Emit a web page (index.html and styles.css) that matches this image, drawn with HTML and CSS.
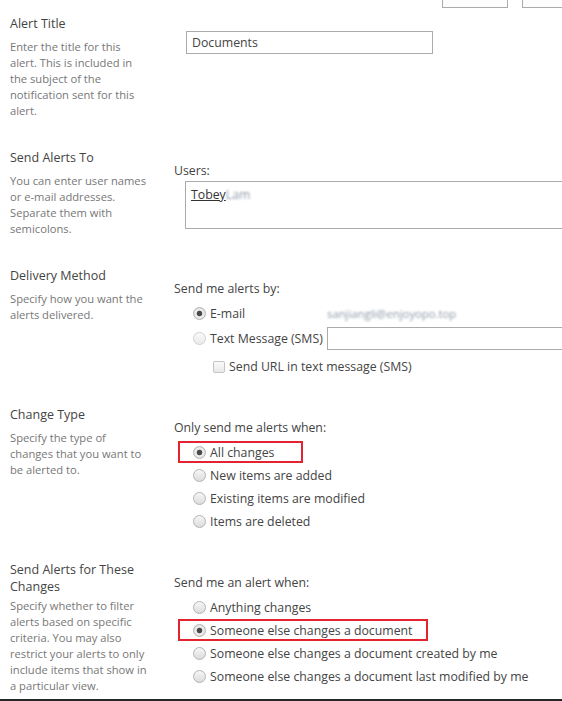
FILE: index.html
```html
<!DOCTYPE html>
<html lang="en">
<head>
    <meta charset="UTF-8" />
    <meta name="viewport" content="width=device-width, initial-scale=1" />
    <title>New Alert</title>
    <link rel="stylesheet" href="styles.css">
</head>
<body>
    <div class="page">
        <div class="toolbar">
            <button class="btn" aria-label="OK"></button>
            <button class="btn btn-wide" aria-label="Cancel"></button>
        </div>

        <div class="section">
            <div class="info">
                <h3 class="info-title">Alert Title</h3>
                <p class="info-desc">Enter the title for this<br>alert. This is included in<br>the subject of the<br>notification sent for this<br>alert.</p>
            </div>
            <div class="field">
                <input type="text" class="text-box title-box" value="Documents" />
            </div>
        </div>

        <div class="section">
            <div class="info">
                <h3 class="info-title">Send Alerts To</h3>
                <p class="info-desc">You can enter user names<br>or e-mail addresses.<br>Separate them with<br>semicolons.</p>
            </div>
            <div class="field">
                <div class="field-label">Users:</div>
                <div class="people-box">
                    <span class="person">Tobey</span><span class="blurred">Lam</span>
                </div>
            </div>
        </div>

        <div class="section">
            <div class="info">
                <h3 class="info-title">Delivery Method</h3>
                <p class="info-desc">Specify how you want the<br>alerts delivered.</p>
            </div>
            <div class="field">
                <div class="field-label">Send me alerts by:</div>
                <div class="options">
                    <div class="delivery-row">
                        <label class="option"><input type="radio" name="delivery" checked /> E-mail</label>
                        <span class="blurred email">sanjiangli@enjoyopo.top</span>
                    </div>
                    <div class="delivery-row sms-row">
                        <label class="option option-disabled"><input type="radio" name="delivery" disabled /> Text Message (SMS)</label>
                        <input type="text" class="text-box sms-box" disabled />
                    </div>
                    <label class="option check-option"><input type="checkbox" disabled /> Send URL in text message (SMS)</label>
                </div>
            </div>
        </div>

        <div class="section">
            <div class="info">
                <h3 class="info-title">Change Type</h3>
                <p class="info-desc">Specify the type of<br>changes that you want to<br>be alerted to.</p>
            </div>
            <div class="field">
                <div class="field-label">Only send me alerts when:</div>
                <div class="options">
                    <label class="option marked mark-short"><input type="radio" name="change" checked /> All changes</label>
                    <label class="option"><input type="radio" name="change" /> New items are added</label>
                    <label class="option"><input type="radio" name="change" /> Existing items are modified</label>
                    <label class="option"><input type="radio" name="change" /> Items are deleted</label>
                </div>
            </div>
        </div>

        <div class="section">
            <div class="info">
                <h3 class="info-title">Send Alerts for These Changes</h3>
                <p class="info-desc tight">Specify whether to filter<br>alerts based on specific<br>criteria. You may also<br>restrict your alerts to only<br>include items that show in<br>a particular view.</p>
            </div>
            <div class="field">
                <div class="field-label">Send me an alert when:</div>
                <div class="options">
                    <label class="option"><input type="radio" name="filter" /> Anything changes</label>
                    <label class="option marked mark-long"><input type="radio" name="filter" checked /> Someone else changes a document</label>
                    <label class="option"><input type="radio" name="filter" /> Someone else changes a document created by me</label>
                    <label class="option"><input type="radio" name="filter" /> Someone else changes a document last modified by me</label>
                </div>
            </div>
        </div>
    </div>
</body>
</html>
```

FILE: styles.css
```css
body {
    margin: 0;
    background: #fff;
    font-family: "Open Sans", "Noto Sans", sans-serif;
    color: #444;
    overflow: hidden;
}
.page {
    width: 610px;
    height: 699px;
    border-bottom: 2px solid #262626;
}
.toolbar {
    display: flex;
    justify-content: flex-end;
    gap: 14px;
    padding-right: 8px;
    height: 8px;
}
.btn {
    width: 66px;
    height: 30px;
    margin-top: -22px;
    background: #fdfdfd;
    border: 1px solid #ababab;
}
.btn-wide {
    width: 80px;
}
.section {
    display: flex;
    padding: 7px 0 28px 10px;
}
.section + .section {
    padding-top: 0;
}
.info {
    width: 144px;
    flex-shrink: 0;
    padding-bottom: 2px;
}
.info-title {
    margin: 0;
    font-size: 12.5px;
    font-weight: normal;
    line-height: 17px;
    color: #444;
}
.info-desc {
    margin: 7px 0 0;
    font-size: 11.2px;
    line-height: 16px;
    color: #777;
}
.info-desc.tight {
    margin-top: 3px;
}
.field {
    padding: 13px 0 0 20px;
    flex: 1;
    font-size: 12.3px;
}
.field-label {
    line-height: 18px;
}
.text-box {
    box-sizing: border-box;
    border: 1px solid #ababab;
    background: #fff;
    font-family: inherit;
    font-size: 12.3px;
    color: #444;
    padding: 0 5px;
}
.title-box {
    margin: 3px 0 0 12px;
    width: 247px;
    height: 23px;
}
.people-box {
    margin: 1px 0 0 11px;
    width: 420px;
    height: 48px;
    box-sizing: border-box;
    border: 1px solid #ababab;
    padding: 4px 5px;
    line-height: 18px;
}
.person {
    text-decoration: underline;
    color: #333;
}
.blurred {
    color: #8f99a8;
    filter: blur(1.3px);
}
.options {
    margin: 4px 0 0 19px;
}
.option {
    position: relative;
    display: flex;
    align-items: center;
    gap: 4px;
    height: 23px;
    white-space: nowrap;
}
.option input {
    appearance: none;
    margin: 0;
    width: 13px;
    height: 13px;
    border: 1px solid #b4b4b4;
    border-radius: 50%;
    background: linear-gradient(#f6f6f6, #dcdcdc);
    flex-shrink: 0;
}
.option input:checked {
    background: radial-gradient(circle, #4a4a4a 0 2.4px, #eeeeee 3.2px, #d6d6d6 100%);
}
.option input[type="checkbox"] {
    width: 12px;
    height: 12px;
    border-radius: 2px;
    border-color: #c4c4c4;
    background: linear-gradient(#fafafa, #e8e8e8);
}
.option-disabled input {
    border-color: #d0d0d0;
    background: linear-gradient(#fafafa, #eaeaea);
}
.delivery-row {
    display: grid;
    grid-template-columns: 134px 1fr;
    align-items: center;
}
.email {
    font-size: 11.3px;
}
.sms-row {
    margin-top: 2px;
}
.sms-box {
    width: 300px;
    height: 23px;
    background: #fff;
}
.check-option {
    margin: 5px 0 0 20px;
}
.marked::after {
    content: "";
    position: absolute;
    left: -15px;
    top: 0;
    height: 22px;
    box-sizing: border-box;
    border: 2px solid #e3232f;
}
.mark-short::after {
    width: 125px;
}
.mark-long::after {
    width: 250px;
}
```
